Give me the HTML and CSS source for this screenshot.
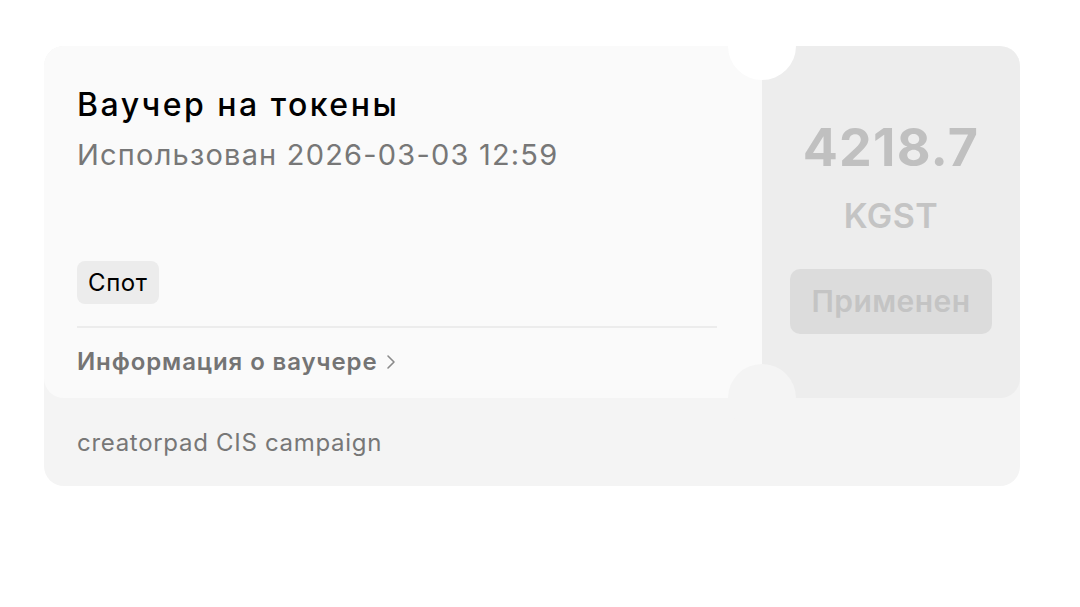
FILE: index.html
```html
<!DOCTYPE html>
<html lang="ru">
<head>
<meta charset="utf-8">
<title>Ваучер</title>
<link rel="stylesheet" href="styles.css">
</head>
<body>
<div class="card">
  <div class="ticket">
    <div class="main">
      <div class="title">Ваучер на токены</div>
      <div class="sub">Использован 2026-03-03 12:59</div>
      <div class="spacer"></div>
      <div class="tag">Спот</div>
      <div class="divider"></div>
      <div class="info"><span>Информация о ваучере</span>
        <svg class="chev" width="10" height="16" viewBox="0 0 10 16"><polyline points="2,2 8,8 2,14" fill="none" stroke="#8a8a8a" stroke-width="1.6" stroke-linecap="round" stroke-linejoin="round"/></svg>
      </div>
    </div>
    <div class="side">
      <div class="amount">4218.7</div>
      <div class="unit">KGST</div>
      <div class="btn">Применен</div>
    </div>
    <div class="notch notch-top"></div>
    <div class="notch notch-bottom"></div>
  </div>
  <div class="footer">creatorpad CIS campaign</div>
</div>
</body>
</html>
```
FILE: styles.css
```css
html, body {
  margin: 0;
  padding: 0;
  background: #ffffff;
}
body {
  font-family: "Inter", "Noto Sans", sans-serif;
  padding: 46px 60px 0 44px;
}
.card {
  width: 976px;
  background: #f4f4f4;
  border-radius: 20px;
  overflow: hidden;
}
.ticket {
  position: relative;
  display: flex;
  height: 352px;
}
.main {
  width: 718px;
  box-sizing: border-box;
  background: #fafafa;
  border-bottom-left-radius: 20px;
  padding: 39px 45px 21px 33px;
  display: flex;
  flex-direction: column;
  align-items: flex-start;
}
.title {
  font-size: 32px;
  line-height: 40px;
  letter-spacing: 2.5px;
  color: #000;
  font-weight: 500;
}
.sub {
  margin-top: 10px;
  font-size: 29px;
  line-height: 40px;
  letter-spacing: 1.2px;
  color: #777;
}
.spacer { flex: 1; }
.tag {
  background: #ececec;
  border-radius: 8px;
  height: 43px;
  line-height: 43px;
  padding: 0 11px;
  font-size: 24px;
  letter-spacing: 0.6px;
  color: #000;
}
.divider {
  align-self: stretch;
  height: 2px;
  background: #ececec;
  margin-top: 22px;
}
.info {
  margin-top: 19px;
  height: 30px;
  line-height: 30px;
  font-size: 24px;
  font-weight: 600;
  letter-spacing: 0.9px;
  color: #747474;
  display: flex;
  align-items: center;
  gap: 8px;
}
.chev { display: block; }
.side {
  flex: 1;
  background: #ededed;
  border-radius: 0 20px 20px 0;
  display: flex;
  flex-direction: column;
  align-items: center;
  padding-top: 74px;
}
.amount {
  font-size: 52px;
  line-height: 56px;
  font-weight: 700;
  letter-spacing: 1.2px;
  color: #c0c0c0;
}
.unit {
  margin-top: 20px;
  font-size: 34px;
  line-height: 40px;
  font-weight: 600;
  letter-spacing: 0.5px;
  color: #c4c4c4;
}
.btn {
  margin-top: 33px;
  width: 202px;
  height: 65px;
  line-height: 65px;
  text-align: center;
  background: #dcdcdc;
  border-radius: 10px;
  font-size: 30px;
  font-weight: 600;
  letter-spacing: 0.4px;
  color: #c4c4c4;
}
.notch {
  position: absolute;
  left: 684px;
  width: 68px;
  height: 68px;
  border-radius: 50%;
}
.notch-top {
  top: -34px;
  background: #ffffff;
}
.notch-bottom {
  bottom: -34px;
  background: #f4f4f4;
}
.footer {
  height: 88px;
  display: flex;
  align-items: center;
  padding-left: 33px;
  font-size: 24px;
  letter-spacing: 0.7px;
  color: #777;
}
```
